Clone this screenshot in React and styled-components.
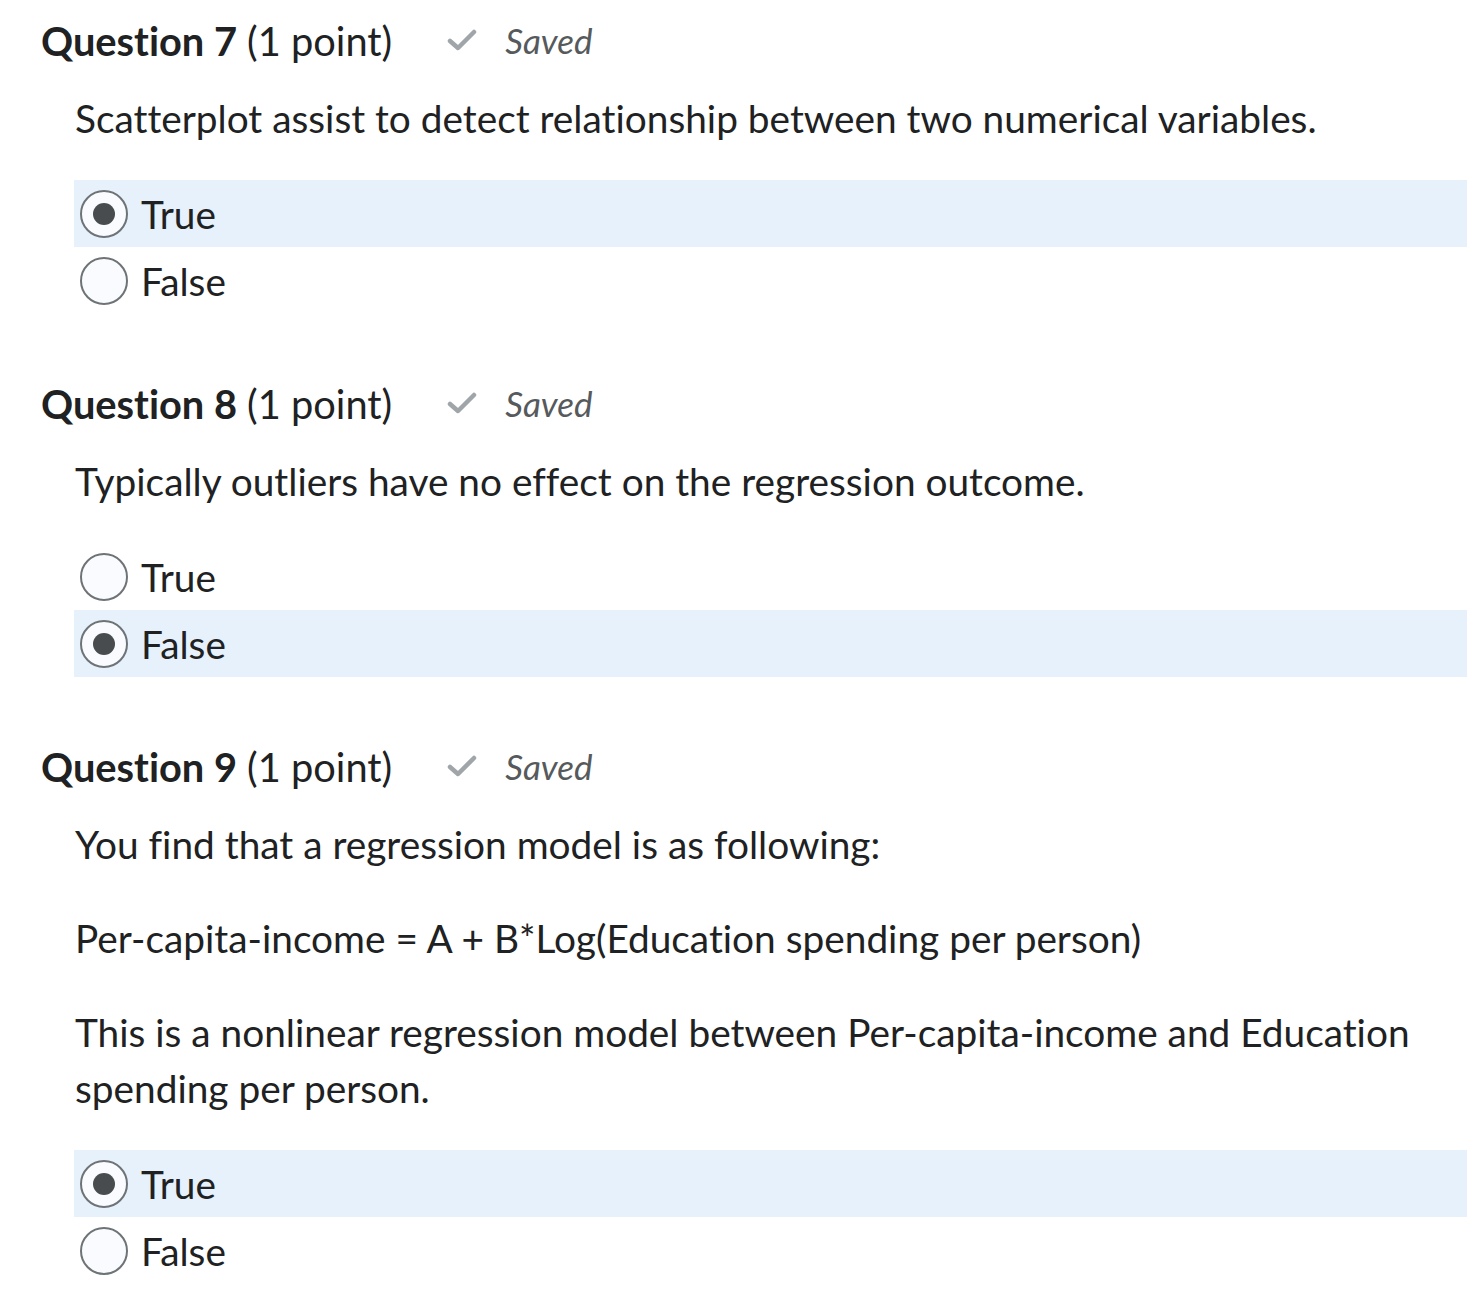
import styled, { createGlobalStyle } from 'styled-components';

const GlobalStyle = createGlobalStyle`
  body {
    margin: 0;
    background: #ffffff;
    font-family: Lato, "Open Sans", sans-serif;
    font-variant-ligatures: none;
    color: #202122;
  }
`;

const Page = styled.div`
  padding: 12px 0 0 41px;
`;

const QuestionBlock = styled.section`
  margin-bottom: 61px;
`;

const Header = styled.div`
  display: flex;
  align-items: center;
  height: 56px;
  font-size: 39.8px;
`;

const Title = styled.span`
  font-weight: 700;
  color: #202122;
`;

const Points = styled.span`
  margin-left: 10px;
  color: #202122;
`;

const Status = styled.span`
  display: flex;
  align-items: center;
  margin-left: 55px;
  font-size: 35px;
  font-style: italic;
  color: #565a5c;
`;

const Check = styled.svg`
  width: 30px;
  height: 24px;
  margin-right: 28px;
`;

const Body = styled.div`
  padding-left: 34px;
  margin-top: 22px;
`;

const Para = styled.p`
  margin: 0 0 38px;
  font-size: 38.8px;
  line-height: 56px;
  color: #202122;
  max-width: 1380px;
`;

const Options = styled.div`
  margin-top: -4px;
  margin-left: -1px;
`;

const Option = styled.label`
  display: flex;
  align-items: center;
  height: 67px;
  padding-left: 6px;
  background: ${p => (p.$selected ? '#e6f1fc' : 'transparent')};
  font-size: 38.8px;
  color: #202122;
`;

const Radio = styled.span`
  box-sizing: border-box;
  width: 48px;
  height: 48px;
  border-radius: 50%;
  border: 2px solid #6e7376;
  background: #f9fbff;
  display: flex;
  align-items: center;
  justify-content: center;
  margin-right: 13px;

  &::after {
    content: '';
    display: ${p => (p.$checked ? 'block' : 'none')};
    width: 22px;
    height: 22px;
    border-radius: 50%;
    background: #494c4e;
  }
`;

const questions = [
  {
    n: 7,
    text: ['Scatterplot assist to detect relationship between two numerical variables.'],
    answer: 'True',
  },
  {
    n: 8,
    text: ['Typically outliers have no effect on the regression outcome.'],
    answer: 'False',
  },
  {
    n: 9,
    text: [
      'You find that a regression model is as following:',
      'Per-capita-income = A + B*Log(Education spending per person)',
      'This is a nonlinear regression model between Per-capita-income and Education spending per person.',
    ],
    answer: 'True',
  },
];

function CheckIcon() {
  return (
    <Check viewBox="0 0 30 24">
      <path d="M3 13 L11 20 L27 4" fill="none" stroke="#a0a5a9" strokeWidth="4.5" strokeLinecap="round" strokeLinejoin="round" />
    </Check>
  );
}

export default function App() {
  return (
    <Page>
      <GlobalStyle />
      {questions.map(q => (
        <QuestionBlock key={q.n}>
          <Header>
            <Title>Question {q.n}</Title>
            <Points>(1 point)</Points>
            <Status>
              <CheckIcon />
              Saved
            </Status>
          </Header>
          <Body>
            {q.text.map((t, i) => (
              <Para key={i}>{t}</Para>
            ))}
            <Options>
              {['True', 'False'].map(opt => (
                <Option key={opt} $selected={opt === q.answer}>
                  <Radio $checked={opt === q.answer} />
                  {opt}
                </Option>
              ))}
            </Options>
          </Body>
        </QuestionBlock>
      ))}
    </Page>
  );
}
